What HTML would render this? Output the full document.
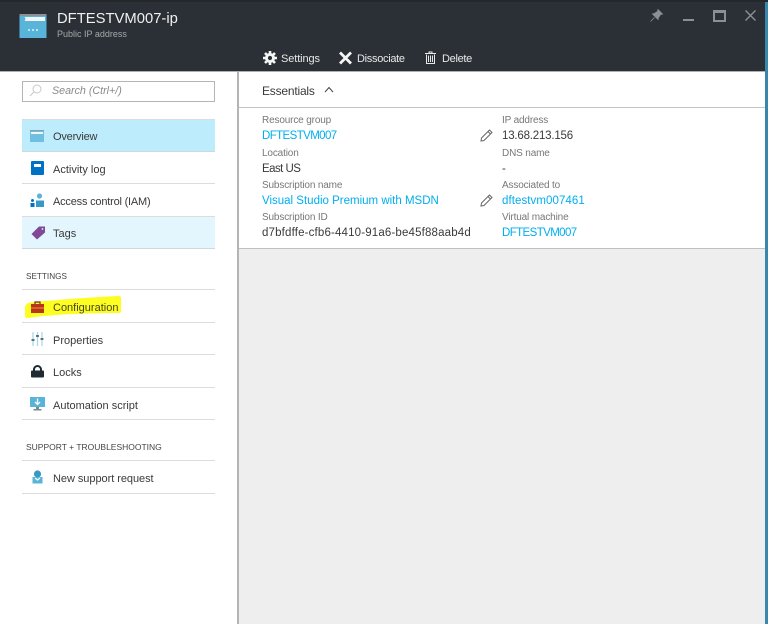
<!DOCTYPE html>
<html>
<head>
<meta charset="utf-8">
<style>
html,body{margin:0;padding:0;background:#fff}
body{width:768px;height:624px;position:relative;overflow:hidden;font-family:"Liberation Sans",sans-serif;color:#3a3a3a;filter:blur(0.3px)}
.t{position:absolute;white-space:nowrap;font-size:11px;line-height:14px}
.b{position:absolute}
.s{color:#777;font-size:10px;letter-spacing:-0.15px}
.v{font-size:11.5px;color:#3a3a3a}
.v.l{color:#00aeef}
.ln{position:absolute;left:22px;width:193px;height:1px;background:#dcdcdc}
.w{color:#e8e8e8}
svg{position:absolute;overflow:visible}
</style>
</head>
<body>
<!-- header -->
<div class="b" style="left:0;top:0;width:768px;height:71px;background:#2a3035"></div>
<div class="b" style="left:0;top:0;width:768px;height:2px;background:#23282c"></div>
<div class="b" style="left:0;top:71px;width:768px;height:1px;background:#b0b0b0"></div>
<svg style="left:19px;top:14px" width="28" height="24" viewBox="0 0 28 24">
<rect x="0.5" y="0" width="27" height="24" fill="#59b4d9"/>
<rect x="0.5" y="0" width="27" height="2" fill="#8a9299"/>
<rect x="3" y="3" width="23" height="4" fill="#f4f4f4"/>
<circle cx="4" cy="5" r="2.4" fill="#59b4d9"/>
<circle cx="10" cy="16" r="1" fill="#dff2fa"/><circle cx="14" cy="16" r="1" fill="#dff2fa"/><circle cx="18" cy="16" r="1" fill="#dff2fa"/>
</svg>
<div class="t" style="left:57px;top:9px;font-size:14.8px;line-height:20px;color:#f0f0f0">DFTESTVM007-ip</div>
<div class="t" style="left:57px;top:28px;font-size:9px;line-height:12px;color:#a5a9ac">Public IP address</div>

<svg style="left:263px;top:51px" width="14" height="14" viewBox="0 0 14 14">
<path d="M7 0V14M0 7H14M2 2L12 12M12 2L2 12" stroke="#f5f5f5" stroke-width="2.600"/>
<circle cx="7" cy="7" r="5" fill="#f5f5f5"/>
<circle cx="7" cy="7" r="2.100" fill="#2a3035"/>
</svg>
<div class="t w" style="left:281px;top:52px;letter-spacing:-0.1px">Settings</div>
<svg style="left:339px;top:52px" width="13" height="12" viewBox="0 0 13 12"><path d="M1 0.500L12 11.500M12 0.500L1 11.500" stroke="#f5f5f5" stroke-width="2.800"/></svg>
<div class="t w" style="left:357px;top:52px;letter-spacing:-0.3px">Dissociate</div>
<svg style="left:425px;top:51px" width="11" height="13" viewBox="0 0 11 13"><path d="M0 2.500H11M4 2.500V1H7V2.500M1.500 3.500V12.500H9.500V3.500M3.500 4.500V11M5.500 4.500V11M7.500 4.500V11" fill="none" stroke="#e8e8e8" stroke-width="1"/></svg>
<div class="t w" style="left:442px;top:52px;letter-spacing:-0.3px">Delete</div>

<svg style="left:650px;top:9px" width="13" height="13" viewBox="0 0 13 13"><path d="M8 0.500L12.500 5L10.500 5.500L8.500 8.500L8 10.500L2.500 5L4.500 4.500L7.500 2.500ZM4.500 8.500L0.500 12.500" fill="#8b9094" stroke="#8b9094" stroke-width="0.800"/></svg>
<div class="b" style="left:683px;top:19px;width:11px;height:2px;background:#8b9094"></div>
<div class="b" style="left:713px;top:10px;width:9px;height:7px;border:2px solid #8b9094;border-top-width:3px"></div>
<svg style="left:745px;top:10px" width="11" height="11" viewBox="0 0 11 11"><path d="M0.500 0.500L10.500 10.500M10.500 0.500L0.500 10.500" stroke="#8b9094" stroke-width="1.400"/></svg>

<!-- right pane -->
<div class="b" style="left:237px;top:72px;width:2px;height:552px;background:#b4b4b4"></div>
<div class="b" style="left:239px;top:249px;width:526px;height:375px;background:#eeeeee"></div>
<div class="b" style="left:239px;top:107px;width:526px;height:1px;background:#c4c4c4"></div>
<div class="b" style="left:239px;top:248px;width:526px;height:1px;background:#c0c0c0"></div>
<div class="b" style="left:765px;top:2px;width:3px;height:622px;background:#3a87ad"></div>

<div class="t" style="left:262px;top:84px;font-size:12px;letter-spacing:-0.2px">Essentials</div>
<svg style="left:324px;top:86px" width="10" height="7" viewBox="0 0 10 7"><path d="M1 6L5 1.500L9 6" fill="none" stroke="#444" stroke-width="1"/></svg>

<div class="t s" style="left:262px;top:114px">Resource group</div>
<div class="t v l" style="left:262px;top:129px;letter-spacing:-0.6px">DFTESTVM007</div>
<div class="t s" style="left:262px;top:147px">Location</div>
<div class="t v" style="left:262px;top:162px;letter-spacing:-0.55px">East US</div>
<div class="t s" style="left:262px;top:179px">Subscription name</div>
<div class="t v l" style="left:262px;top:194px">Visual Studio Premium with MSDN</div>
<div class="t s" style="left:262px;top:211px">Subscription ID</div>
<div class="t v" style="left:262px;top:226px;letter-spacing:0.16px">d7bfdffe-cfb6-4410-91a6-be45f88aab4d</div>

<div class="t s" style="left:502px;top:114px">IP address</div>
<div class="t v" style="left:502px;top:129px;letter-spacing:-0.2px">13.68.213.156</div>
<div class="t s" style="left:502px;top:147px">DNS name</div>
<div class="t v" style="left:502px;top:162px">-</div>
<div class="t s" style="left:502px;top:179px">Associated to</div>
<div class="t v l" style="left:502px;top:194px;letter-spacing:0.07px">dftestvm007461</div>
<div class="t s" style="left:502px;top:211px">Virtual machine</div>
<div class="t v l" style="left:502px;top:226px;letter-spacing:-0.6px">DFTESTVM007</div>

<svg style="left:480px;top:129px" width="13" height="13" viewBox="0 0 13 13"><path d="M9.500 1L12 3.500L4 11.500L1 12L1.500 9ZM8 2.500L10.500 5" fill="none" stroke="#666" stroke-width="1"/></svg>
<svg style="left:480px;top:194px" width="13" height="13" viewBox="0 0 13 13"><path d="M9.500 1L12 3.500L4 11.500L1 12L1.500 9ZM8 2.500L10.500 5" fill="none" stroke="#666" stroke-width="1"/></svg>

<!-- sidebar -->
<div class="b" style="left:22px;top:81px;width:191px;height:19px;border:1px solid #b5b5b5"></div>
<svg style="left:29px;top:84px" width="13" height="13" viewBox="0 0 13 13"><circle cx="8" cy="5" r="4" fill="none" stroke="#c8c8c8"/><path d="M5 8L1 12" stroke="#c8c8c8"/></svg>
<div class="t" style="left:52px;top:84px;font-style:italic;font-size:10.700px;color:#8a8a8a">Search (Ctrl+/)</div>

<div class="b" style="left:22px;top:120px;width:193px;height:31px;background:#bdecfd"></div>
<div class="b" style="left:22px;top:217px;width:193px;height:31px;background:#e3f6fe"></div>
<div class="ln" style="top:119px"></div>
<div class="ln" style="top:151px;background:#cfd8dc"></div>
<div class="ln" style="top:183px"></div>
<div class="ln" style="top:216px"></div>
<div class="ln" style="top:248px;background:#cfd8dc"></div>
<div class="ln" style="top:289px"></div>
<div class="ln" style="top:322px"></div>
<div class="ln" style="top:354px"></div>
<div class="ln" style="top:387px"></div>
<div class="ln" style="top:419px"></div>
<div class="ln" style="top:460px"></div>
<div class="ln" style="top:493px"></div>

<svg style="left:30px;top:130px" width="14" height="12" viewBox="0 0 14 12"><rect width="14" height="12" fill="#6fbfe0"/><rect width="14" height="1" fill="#8f9da5"/><rect x="1" y="2" width="12" height="2" fill="#eef6fa"/></svg>
<div class="t" style="left:53px;top:130px;letter-spacing:-0.2px">Overview</div>

<svg style="left:31px;top:161px" width="13" height="14" viewBox="0 0 13 14"><rect width="13" height="14" rx="1" fill="#0072c6"/><rect x="3" y="3" width="7" height="3" fill="#fff"/></svg>
<div class="t" style="left:53px;top:163px">Activity log</div>

<svg style="left:30px;top:193px" width="14" height="14" viewBox="0 0 14 14"><circle cx="9.500" cy="3" r="2.600" fill="#59b4d9"/><path d="M6 14V7.500H14V14Z" fill="#3999c6"/><circle cx="2.500" cy="7.500" r="1.500" fill="#0072c6"/><path d="M0.500 14V10H4.500V14Z" fill="#0072c6"/></svg>
<div class="t" style="left:53px;top:195px;letter-spacing:-0.2px">Access control (IAM)</div>

<svg style="left:31px;top:226px" width="14" height="14" viewBox="0 0 14 14"><path d="M8 0.500H14V6.500L6 13.500L0.500 8Z" fill="#804998"/><circle cx="11.500" cy="3" r="0.900" fill="#e3f6fe"/></svg>
<div class="t" style="left:53px;top:227px">Tags</div>

<div class="t" style="left:26px;top:270px;font-size:8.200px;color:#444">SETTINGS</div>

<svg style="left:24px;top:295px" width="98" height="24" viewBox="0 0 98 24"><path d="M1 12Q2 8 6 7.500C30 5 70 2 94 1Q97 1 97 3L97 16Q97 18 94 18C70 18 30 19 4 23Q0 23 1 19Z" fill="#fdfd22"/></svg>
<svg style="left:31px;top:301px" width="13" height="12" viewBox="0 0 13 12"><path d="M4 3V1H9V3" fill="none" stroke="#7a2a1a" stroke-width="1.200"/><rect y="3" width="13" height="9" fill="#b8331c"/><rect y="6.500" width="13" height="1" fill="#f09a20"/></svg>
<div class="t" style="left:53px;top:301px;color:#45471a">Configuration</div>

<svg style="left:31px;top:332px" width="13" height="14" viewBox="0 0 13 14"><path d="M2 0V14M6.500 0V14M11 0V14" stroke="#a9d8ec" stroke-width="1.300"/><path d="M0.500 8H3.500M5 4H8M9.500 7H12.500" stroke="#3a4a55" stroke-width="1.600"/></svg>
<div class="t" style="left:53px;top:334px">Properties</div>

<svg style="left:31px;top:365px" width="13" height="12" viewBox="0 0 13 12"><path d="M3 6V4.500A3.500 3.500 0 0 1 10 4.500V6" fill="none" stroke="#1f2a33" stroke-width="2"/><rect y="5.500" width="13" height="7" rx="1" fill="#1f2a33"/></svg>
<div class="t" style="left:53px;top:366px">Locks</div>

<svg style="left:30px;top:397px" width="15" height="14" viewBox="0 0 15 14"><rect width="15" height="10" fill="#59b4d9"/><path d="M7.500 1.500V7M5 5L7.500 7.500L10 5" fill="none" stroke="#fff" stroke-width="1.300"/><path d="M6 10H9V12H11.500V13.500H3.500V12H6Z" fill="#7a8a94"/></svg>
<div class="t" style="left:53px;top:399px">Automation script</div>

<div class="t" style="left:26px;top:440px;font-size:8.500px;color:#444">SUPPORT + TROUBLESHOOTING</div>

<svg style="left:32px;top:470px" width="11" height="14" viewBox="0 0 11 14"><circle cx="5.500" cy="4" r="3.600" fill="#3999c6"/><path d="M0.500 7H10.500V13.500H0.500Z" fill="#59b4d9"/><path d="M3 8L5.500 10L8 8" fill="none" stroke="#fff" stroke-width="1.200"/></svg>
<div class="t" style="left:53px;top:472px;letter-spacing:-0.05px">New support request</div>
</body>
</html>
